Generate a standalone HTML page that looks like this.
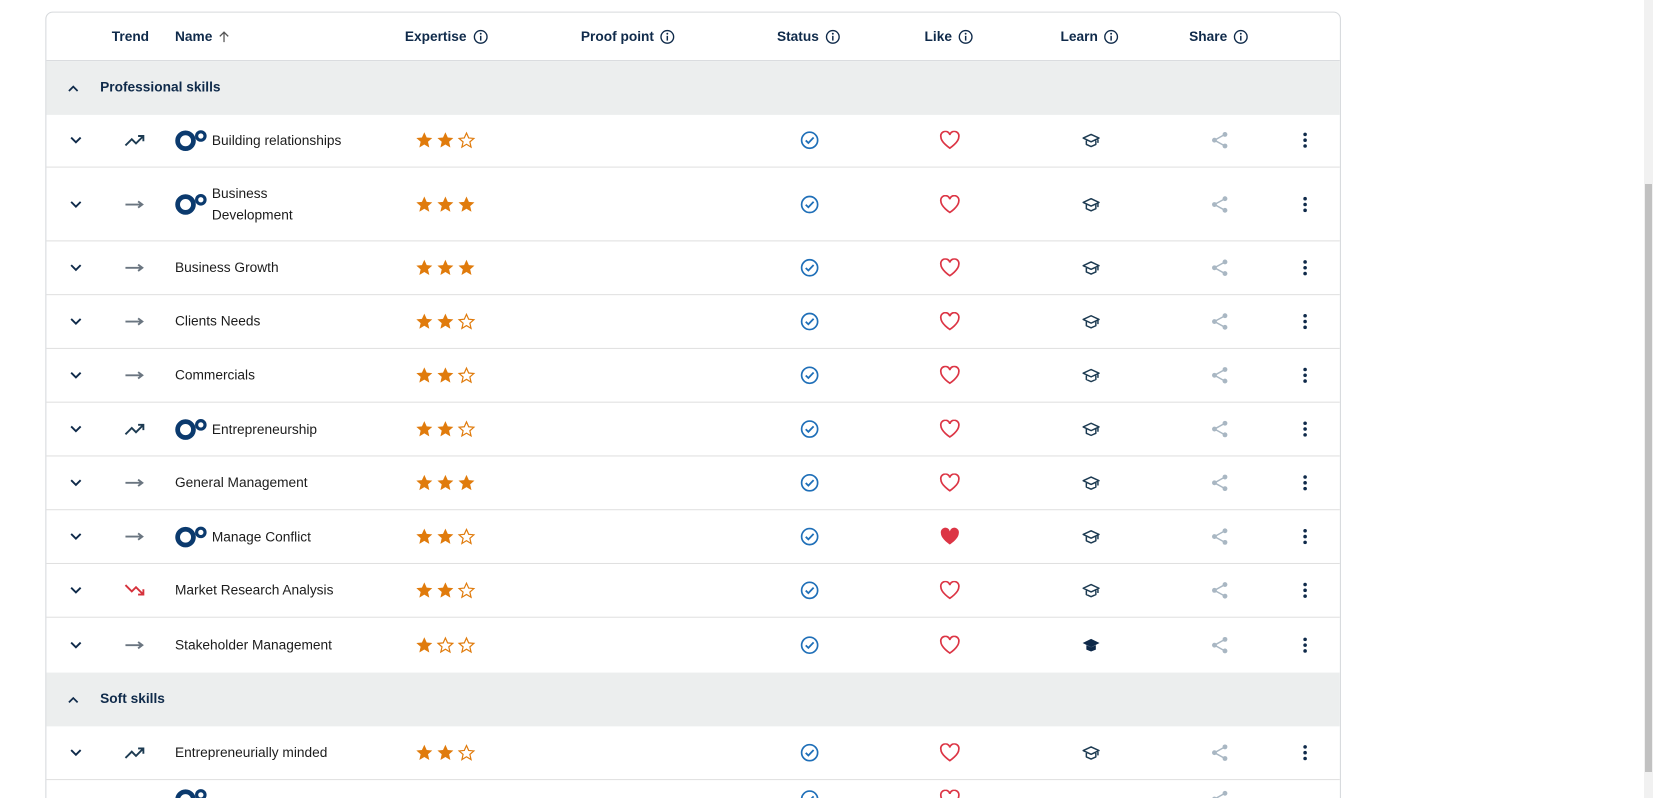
<!DOCTYPE html>
<html style="width:1653px;height:798px;overflow:hidden"><head><meta charset="utf-8"><style>
*{margin:0;padding:0;box-sizing:border-box}
body{width:1653px;height:798px;overflow:hidden;background:#fff;font-family:"Liberation Sans",Arial,sans-serif;position:relative}
.wrap{position:absolute;left:0;top:0;width:1568px;height:757px;overflow:hidden;transform:scale(1.0542);transform-origin:0 0}
.card{position:absolute;left:43px;top:11px;width:1229px;height:770px;border:1px solid #d6d9dc;border-radius:7px;overflow:hidden;background:#fff}
.hd{position:absolute;top:0;left:0;right:0;height:46px;border-bottom:1px solid #d6d9dc}
.hd span{position:absolute;top:15px;font-size:13px;font-weight:bold;color:#0f2a4a;display:flex;align-items:center;gap:6px}
.grp{position:absolute;left:0;right:0;height:51px;background:#eceeee}
.grp b{position:absolute;left:51px;top:17px;font-size:13px;color:#0f2a4a}
.row{position:absolute;left:0;right:0;height:51px;border-bottom:1px solid #e0e0e0}
.row>*{position:absolute;top:50%;transform:translateY(-50%)}
.nm{left:122px;font-size:13px;color:#1c1c1c;display:flex;align-items:center;line-height:20px}
.nm svg{margin-right:4px;transform:none}
.c1{left:22px}.c2{left:74px}.st{left:350px;display:flex;gap:3px}
.s1{left:715px}.s2{left:847px}.s3{left:982px}.s4{left:1104px}.s5{left:1192px}
.sb{position:absolute;left:1644px;top:0;width:9px;height:798px;background:#f1f1f1}
.th{position:absolute;left:1645px;top:184px;width:7px;height:588px;background:#c1c1c1}
</style></head><body>
<svg width="0" height="0" style="position:absolute">
<defs>
<symbol id="info" viewBox="0 0 14 14"><circle cx="7" cy="7" r="6" fill="none" stroke="#0f2a4a" stroke-width="1.3"/><rect x="6.3" y="6" width="1.4" height="4.5" fill="#0f2a4a"/><circle cx="7" cy="4" r=".9" fill="#0f2a4a"/></symbol>
<symbol id="chev" viewBox="0 0 12 8"><path d="M1.5 1.5 6 6 10.5 1.5" fill="none" stroke="#0f2a4a" stroke-width="1.8"/></symbol>
<symbol id="up" viewBox="0 0 20 14"><path d="M1 12 7 6 11 10 18 3M13 3h5v5" fill="none" stroke="#1d3b52" stroke-width="1.8"/></symbol>
<symbol id="flat" viewBox="0 0 20 14"><path d="M1 7h15M13 4l4 3-4 3" fill="none" stroke="#6a7580" stroke-width="1.8"/></symbol>
<symbol id="down" viewBox="0 0 20 14"><path d="M1 2 7 8 11 4 18 11M13 11h5V6" fill="none" stroke="#d6323c" stroke-width="1.8"/></symbol>
<symbol id="logo" viewBox="0 0 31 21"><circle cx="10" cy="11" r="7.5" fill="none" stroke="#0b3a6e" stroke-width="4.5"/><circle cx="24.5" cy="6.5" r="4" fill="none" stroke="#0b3a6e" stroke-width="3"/></symbol>
<symbol id="sf" viewBox="0 0 18 18"><path d="M9 1l2.4 5.3 5.6.5-4.3 3.8 1.3 5.7L9 13.3 4 16.3l1.3-5.7L1 6.8l5.6-.5z" fill="#e07b0c"/></symbol>
<symbol id="se" viewBox="0 0 18 18"><path d="M9 1.8l2.2 4.9 5.2.5-4 3.5 1.2 5.2L9 13.1l-4.6 2.8 1.2-5.2-4-3.5 5.2-.5z" fill="none" stroke="#e07b0c" stroke-width="1.2"/></symbol>
<symbol id="chk" viewBox="0 0 18 18"><circle cx="9" cy="9" r="7.6" fill="none" stroke="#1f6fb8" stroke-width="1.6"/><path d="M5.3 9.2 7.8 11.6 12.8 6.4" fill="none" stroke="#1f6fb8" stroke-width="1.7"/></symbol>
<symbol id="hrt" viewBox="0 0 20 18"><path d="M10 16.5S1.5 11 1.5 5.8A4.2 4.2 0 0 1 10 4a4.2 4.2 0 0 1 8.5 1.8C18.5 11 10 16.5 10 16.5z" fill="none" stroke="#dc3545" stroke-width="1.6"/></symbol>
<symbol id="hrtf" viewBox="0 0 20 18"><path d="M10 16.5S1.5 11 1.5 5.8A4.2 4.2 0 0 1 10 4a4.2 4.2 0 0 1 8.5 1.8C18.5 11 10 16.5 10 16.5z" fill="#dc3545"/></symbol>
<symbol id="cap" viewBox="0 0 18 16"><path d="M1.5 6 9 2.5 16.5 6 9 9.5z M4.5 7.5v4.5l4.5 2 4.5-2V7.5 M15.5 6.5v4" fill="none" stroke="#1d3b52" stroke-width="1.4" stroke-linejoin="round"/></symbol>
<symbol id="capf" viewBox="0 0 18 16"><path d="M1 6 9 2 17 6 9 10z" fill="#0f2a4a"/><path d="M4.5 8v4.2L9 14l4.5-1.8V8L9 10z" fill="#0f2a4a"/></symbol>
<symbol id="shr" viewBox="0 0 18 18"><circle cx="14" cy="3.5" r="2.3" fill="#a9b7c3"/><circle cx="4" cy="9" r="2.3" fill="#a9b7c3"/><circle cx="14" cy="14.5" r="2.3" fill="#a9b7c3"/><path d="M14 3.5 4 9l10 5.5" fill="none" stroke="#a9b7c3" stroke-width="1.4"/></symbol>
<symbol id="dots" viewBox="0 0 4 16"><circle cx="2" cy="2.5" r="1.7" fill="#0f2a4a"/><circle cx="2" cy="8" r="1.7" fill="#0f2a4a"/><circle cx="2" cy="13.5" r="1.7" fill="#0f2a4a"/></symbol>
</defs></svg>

<div class="wrap">
<div class="card">
<div class="hd">
<span style="left:62px">Trend</span>
<span style="left:122px">Name <svg width="11" height="12" viewBox="0 0 11 12"><path d="M5.5 11V1.5M1.5 5.5l4-4 4 4" fill="none" stroke="#555" stroke-width="1.2"/></svg></span>
<span style="left:340px">Expertise <svg width="14" height="14"><use href="#info"/></svg></span>
<span style="left:507px">Proof point <svg width="14" height="14"><use href="#info"/></svg></span>
<span style="left:693px">Status <svg width="14" height="14"><use href="#info"/></svg></span>
<span style="left:833px">Like <svg width="14" height="14"><use href="#info"/></svg></span>
<span style="left:962px">Learn <svg width="14" height="14"><use href="#info"/></svg></span>
<span style="left:1084px">Share <svg width="14" height="14"><use href="#info"/></svg></span>
</div>

<div class="grp" style="top:46px"><svg style="position:absolute;left:20px;top:22px;transform:rotate(180deg)" width="11" height="8"><use href="#chev"/></svg><b>Professional skills</b></div>

<div class="row" style="top:96px"><svg class="c1" width="12" height="8"><use href="#chev"/></svg><svg class="c2" width="20" height="14"><use href="#up"/></svg><div class="nm"><svg width="31" height="21"><use href="#logo"/></svg>Building relationships</div><div class="st"><svg width="17" height="17"><use href="#sf"/></svg><svg width="17" height="17"><use href="#sf"/></svg><svg width="17" height="17"><use href="#se"/></svg></div><svg class="s1" width="18" height="18"><use href="#chk"/></svg><svg class="s2" width="20" height="18"><use href="#hrt"/></svg><svg class="s3" width="18" height="16"><use href="#cap"/></svg><svg class="s4" width="18" height="18"><use href="#shr"/></svg><svg class="s5" width="4" height="16"><use href="#dots"/></svg></div>

<div class="row" style="top:147px;height:70px"><svg class="c1" width="12" height="8"><use href="#chev"/></svg><svg class="c2" width="20" height="14"><use href="#flat"/></svg><div class="nm"><svg width="31" height="21"><use href="#logo"/></svg>Business<br>Development</div><div class="st"><svg width="17" height="17"><use href="#sf"/></svg><svg width="17" height="17"><use href="#sf"/></svg><svg width="17" height="17"><use href="#sf"/></svg></div><svg class="s1" width="18" height="18"><use href="#chk"/></svg><svg class="s2" width="20" height="18"><use href="#hrt"/></svg><svg class="s3" width="18" height="16"><use href="#cap"/></svg><svg class="s4" width="18" height="18"><use href="#shr"/></svg><svg class="s5" width="4" height="16"><use href="#dots"/></svg></div>

<div class="row" style="top:217px"><svg class="c1" width="12" height="8"><use href="#chev"/></svg><svg class="c2" width="20" height="14"><use href="#flat"/></svg><div class="nm">Business Growth</div><div class="st"><svg width="17" height="17"><use href="#sf"/></svg><svg width="17" height="17"><use href="#sf"/></svg><svg width="17" height="17"><use href="#sf"/></svg></div><svg class="s1" width="18" height="18"><use href="#chk"/></svg><svg class="s2" width="20" height="18"><use href="#hrt"/></svg><svg class="s3" width="18" height="16"><use href="#cap"/></svg><svg class="s4" width="18" height="18"><use href="#shr"/></svg><svg class="s5" width="4" height="16"><use href="#dots"/></svg></div>

<div class="row" style="top:268px"><svg class="c1" width="12" height="8"><use href="#chev"/></svg><svg class="c2" width="20" height="14"><use href="#flat"/></svg><div class="nm">Clients Needs</div><div class="st"><svg width="17" height="17"><use href="#sf"/></svg><svg width="17" height="17"><use href="#sf"/></svg><svg width="17" height="17"><use href="#se"/></svg></div><svg class="s1" width="18" height="18"><use href="#chk"/></svg><svg class="s2" width="20" height="18"><use href="#hrt"/></svg><svg class="s3" width="18" height="16"><use href="#cap"/></svg><svg class="s4" width="18" height="18"><use href="#shr"/></svg><svg class="s5" width="4" height="16"><use href="#dots"/></svg></div>

<div class="row" style="top:319px"><svg class="c1" width="12" height="8"><use href="#chev"/></svg><svg class="c2" width="20" height="14"><use href="#flat"/></svg><div class="nm">Commercials</div><div class="st"><svg width="17" height="17"><use href="#sf"/></svg><svg width="17" height="17"><use href="#sf"/></svg><svg width="17" height="17"><use href="#se"/></svg></div><svg class="s1" width="18" height="18"><use href="#chk"/></svg><svg class="s2" width="20" height="18"><use href="#hrt"/></svg><svg class="s3" width="18" height="16"><use href="#cap"/></svg><svg class="s4" width="18" height="18"><use href="#shr"/></svg><svg class="s5" width="4" height="16"><use href="#dots"/></svg></div>

<div class="row" style="top:370px"><svg class="c1" width="12" height="8"><use href="#chev"/></svg><svg class="c2" width="20" height="14"><use href="#up"/></svg><div class="nm"><svg width="31" height="21"><use href="#logo"/></svg>Entrepreneurship</div><div class="st"><svg width="17" height="17"><use href="#sf"/></svg><svg width="17" height="17"><use href="#sf"/></svg><svg width="17" height="17"><use href="#se"/></svg></div><svg class="s1" width="18" height="18"><use href="#chk"/></svg><svg class="s2" width="20" height="18"><use href="#hrt"/></svg><svg class="s3" width="18" height="16"><use href="#cap"/></svg><svg class="s4" width="18" height="18"><use href="#shr"/></svg><svg class="s5" width="4" height="16"><use href="#dots"/></svg></div>

<div class="row" style="top:421px"><svg class="c1" width="12" height="8"><use href="#chev"/></svg><svg class="c2" width="20" height="14"><use href="#flat"/></svg><div class="nm">General Management</div><div class="st"><svg width="17" height="17"><use href="#sf"/></svg><svg width="17" height="17"><use href="#sf"/></svg><svg width="17" height="17"><use href="#sf"/></svg></div><svg class="s1" width="18" height="18"><use href="#chk"/></svg><svg class="s2" width="20" height="18"><use href="#hrt"/></svg><svg class="s3" width="18" height="16"><use href="#cap"/></svg><svg class="s4" width="18" height="18"><use href="#shr"/></svg><svg class="s5" width="4" height="16"><use href="#dots"/></svg></div>

<div class="row" style="top:472px"><svg class="c1" width="12" height="8"><use href="#chev"/></svg><svg class="c2" width="20" height="14"><use href="#flat"/></svg><div class="nm"><svg width="31" height="21"><use href="#logo"/></svg>Manage Conflict</div><div class="st"><svg width="17" height="17"><use href="#sf"/></svg><svg width="17" height="17"><use href="#sf"/></svg><svg width="17" height="17"><use href="#se"/></svg></div><svg class="s1" width="18" height="18"><use href="#chk"/></svg><svg class="s2" width="20" height="18"><use href="#hrtf"/></svg><svg class="s3" width="18" height="16"><use href="#cap"/></svg><svg class="s4" width="18" height="18"><use href="#shr"/></svg><svg class="s5" width="4" height="16"><use href="#dots"/></svg></div>

<div class="row" style="top:523px"><svg class="c1" width="12" height="8"><use href="#chev"/></svg><svg class="c2" width="20" height="14"><use href="#down"/></svg><div class="nm">Market Research Analysis</div><div class="st"><svg width="17" height="17"><use href="#sf"/></svg><svg width="17" height="17"><use href="#sf"/></svg><svg width="17" height="17"><use href="#se"/></svg></div><svg class="s1" width="18" height="18"><use href="#chk"/></svg><svg class="s2" width="20" height="18"><use href="#hrt"/></svg><svg class="s3" width="18" height="16"><use href="#cap"/></svg><svg class="s4" width="18" height="18"><use href="#shr"/></svg><svg class="s5" width="4" height="16"><use href="#dots"/></svg></div>

<div class="row" style="top:574px;border-bottom:none"><svg class="c1" width="12" height="8"><use href="#chev"/></svg><svg class="c2" width="20" height="14"><use href="#flat"/></svg><div class="nm">Stakeholder Management</div><div class="st"><svg width="17" height="17"><use href="#sf"/></svg><svg width="17" height="17"><use href="#se"/></svg><svg width="17" height="17"><use href="#se"/></svg></div><svg class="s1" width="18" height="18"><use href="#chk"/></svg><svg class="s2" width="20" height="18"><use href="#hrt"/></svg><svg class="s3" width="18" height="16"><use href="#capf"/></svg><svg class="s4" width="18" height="18"><use href="#shr"/></svg><svg class="s5" width="4" height="16"><use href="#dots"/></svg></div>

<div class="grp" style="top:626px"><svg style="position:absolute;left:20px;top:22px;transform:rotate(180deg)" width="11" height="8"><use href="#chev"/></svg><b>Soft skills</b></div>

<div class="row" style="top:677px"><svg class="c1" width="12" height="8"><use href="#chev"/></svg><svg class="c2" width="20" height="14"><use href="#up"/></svg><div class="nm">Entrepreneurially minded</div><div class="st"><svg width="17" height="17"><use href="#sf"/></svg><svg width="17" height="17"><use href="#sf"/></svg><svg width="17" height="17"><use href="#se"/></svg></div><svg class="s1" width="18" height="18"><use href="#chk"/></svg><svg class="s2" width="20" height="18"><use href="#hrt"/></svg><svg class="s3" width="18" height="16"><use href="#cap"/></svg><svg class="s4" width="18" height="18"><use href="#shr"/></svg><svg class="s5" width="4" height="16"><use href="#dots"/></svg></div>

<div class="row" style="top:728px;border-bottom:none"><svg class="c1" width="12" height="8"><use href="#chev"/></svg><svg class="c2" width="20" height="14"><use href="#flat"/></svg><div class="nm" style="top:18px"><svg width="31" height="21"><use href="#logo"/></svg></div><svg class="s1" width="18" height="18" style="top:18px"><use href="#chk"/></svg><svg class="s2" width="20" height="18" style="top:18px"><use href="#hrt"/></svg><svg class="s4" width="18" height="18" style="top:18px"><use href="#shr"/></svg></div>
</div>
</div>

<div class="sb"></div><div class="th"></div>
</body></html>
